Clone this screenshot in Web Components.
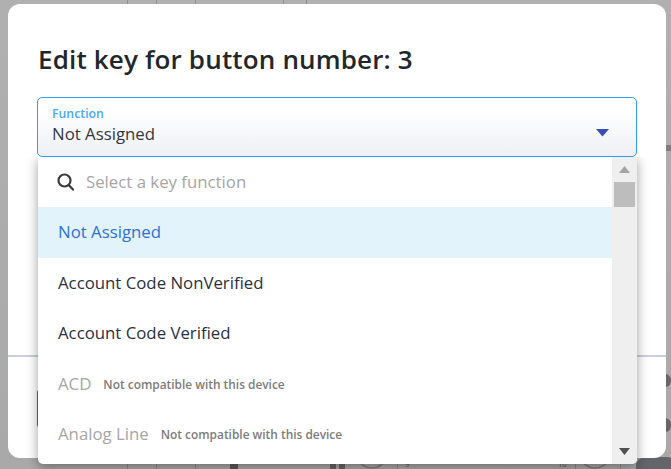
<!DOCTYPE html>
<html><head><meta charset="utf-8"><style>
html,body{margin:0;height:100%;overflow:hidden;background:#adadad}
body{width:671px;height:469px;position:relative;font-family:"Open Sans","Noto Sans",sans-serif}
</style></head><body>
<x-backdrop></x-backdrop>
<x-dialog heading="Edit key for button number: 3">
  <x-select label="Function" value="Not Assigned">
    <x-menu placeholder="Select a key function">
      <x-option selected>Not Assigned</x-option>
      <x-option>Account Code NonVerified</x-option>
      <x-option>Account Code Verified</x-option>
      <x-option disabled note="Not compatible with this device">ACD</x-option>
      <x-option disabled note="Not compatible with this device">Analog Line</x-option>
    </x-menu>
  </x-select>
</x-dialog>
<script>
function def(name, html, init){
  customElements.define(name, class extends HTMLElement{
    connectedCallback(){
      if(this.shadowRoot) return;
      const r=this.attachShadow({mode:'open'});
      r.innerHTML=html;
      if(init) init.call(this,r);
    }
  });
}
def('x-backdrop',`<style>
:host{position:absolute;inset:0;display:block;overflow:hidden;background:linear-gradient(#b0b0b0,#a9a9a9)}
svg{position:absolute;inset:0}
text{font:7.5px "Open Sans",sans-serif;fill:#555}
</style><svg width="671" height="469" viewBox="0 0 671 469">
<g stroke="#8e8e8e" stroke-width="1"><path d="M127.5 0V4M156.5 0V4M195.5 0V4M283.5 0V4M306.5 0V4M127.5 458V469M156.5 458V469M195.5 458V469M397.5 458V469M575.5 458V469M620.5 458V469"/></g>
<rect x="230" y="463" width="8" height="6" fill="#5c5c5c"/>
<rect x="330" y="463" width="6" height="6" fill="#666"/><rect x="339" y="463" width="6" height="6" fill="#666"/>
<circle cx="372" cy="452" r="16" fill="none" stroke="#7d7d7d" stroke-width="1.5"/>
<circle cx="595" cy="452" r="16" fill="none" stroke="#7d7d7d" stroke-width="1.5"/>
<text x="405" y="467">9</text><text x="558" y="467">10</text>
<rect x="636" y="457" width="40" height="20" rx="9" fill="#62666b"/>
<path d="M666 145h5v6h-5z" fill="#7d7d7d"/>
<path d="M666 374a7 7 0 0 1 5 6 7 7 0 0 1-5 7zM666 418a7 7 0 0 1 5 7 7 7 0 0 1-5 7z" fill="#666"/>
</svg>`);
def('x-dialog',`<style>
:host{position:absolute;left:8px;top:4px;width:658px;height:453.5px;box-sizing:border-box;display:flex;flex-direction:column;background:#fff;border-radius:12px;color:#212529}
h2{margin:0;padding:38px 29px 0 30px;font:600 26px/35px "Open Sans",sans-serif;letter-spacing:.16px;color:#23272b}
.body{padding:20px 29px 0 29px;flex:1}
hr{margin:0;border:0;height:2px;background:#c9cfe0}
.foot{height:101px;box-sizing:border-box;padding:32px 29px 0;display:flex;gap:12px}
.btn{width:140px;height:39px;box-sizing:border-box;border-radius:4px;background:#c8402e}
</style><h2></h2><div class="body"><slot></slot></div><hr><div class="foot"><div class="btn"></div></div>`,function(r){r.querySelector('h2').textContent=this.getAttribute('heading')});
def('x-select',`<style>
:host{display:block;position:relative;width:600px;height:60px;box-sizing:border-box;border:1px solid #2f9df4;border-radius:5px;background:linear-gradient(#fff 20%,#eef0f5)}
.f{padding:9px 14px 0;display:block}
.l{font:600 12.3px/14px "Open Sans",sans-serif;color:#4aa9f5;display:block}
.v{font:400 16.8px/23px "Open Sans",sans-serif;color:#33383d;display:block;margin-top:1px}
svg{position:absolute;left:557.5px;top:31px}
.menu{position:absolute;left:0;top:59px}
</style><div class="f"><span class="l"></span><span class="v"></span></div>
<svg width="13" height="8" viewBox="0 0 13 8"><path d="M0 0h13L6.5 7.5z" fill="#3b4db5"/></svg>
<div class="menu"><slot></slot></div>`,function(r){r.querySelector('.l').textContent=this.getAttribute('label');r.querySelector('.v').textContent=this.getAttribute('value')});
def('x-menu',`<style>
:host{display:flex;width:599px;height:307px;background:#fff;border-radius:0 0 5px 5px;overflow:hidden;box-shadow:0 3px 12px rgba(0,0,0,.38);clip-path:inset(0 -14px -14px -14px)}
.list{flex:1;min-width:0;display:flex;flex-direction:column}
.search{height:50px;box-sizing:border-box;padding-bottom:1px;flex:none;display:flex;align-items:center;gap:12px;padding-left:19px;font:400 16.8px/23px "Open Sans",sans-serif;color:#a5a5a5}
.search svg{margin-top:1px}
.bar{width:25px;flex:none;background:#efefef;display:flex;flex-direction:column;align-items:center;position:relative}
.up{margin-top:9px;width:11px;height:7px;}
.thumb{margin-top:9px;width:21px;height:25px;background:#bdbdbd}
.down{position:absolute;bottom:9px;width:11px;height:7px}
</style><div class="list"><div class="search">
<svg width="17" height="18" viewBox="0 0 17 18" fill="none" stroke="#3a3a3a" stroke-width="2.2"><circle cx="7.5" cy="7.5" r="6"/><path d="M11.8 12.2L16 16.6" stroke-linecap="round"/></svg>
<span class="ph"></span></div><slot></slot></div>
<div class="bar"><svg class="up" viewBox="0 0 11 7"><path d="M0 7L5.5 0 11 7z" fill="#a3a3a3"/></svg><div class="thumb"></div><svg class="down" viewBox="0 0 11 7"><path d="M0 0L5.5 7 11 0z" fill="#505050"/></svg></div>`,function(r){r.querySelector('.ph').textContent=this.getAttribute('placeholder')});
def('x-option',`<style>
:host{display:flex;align-items:center;gap:10px;height:50.5px;box-sizing:border-box;padding-bottom:1px;flex:none;padding-left:20px;font:400 16.8px/23px "Open Sans",sans-serif;color:#2a3040;white-space:nowrap}
:host([selected]){color:#2b72d8;background:#e3f3fb}
:host([disabled]){color:#a6a6a6}
.n{font:600 11.9px/14px "Open Sans",sans-serif;color:#7c7c7c;margin-left:2px;padding-top:1px}
</style><slot></slot><span class="n" hidden></span>`,function(r){const n=this.getAttribute('note');if(n){const s=r.querySelector('.n');s.textContent=n;s.hidden=false}});
</script></body></html>
